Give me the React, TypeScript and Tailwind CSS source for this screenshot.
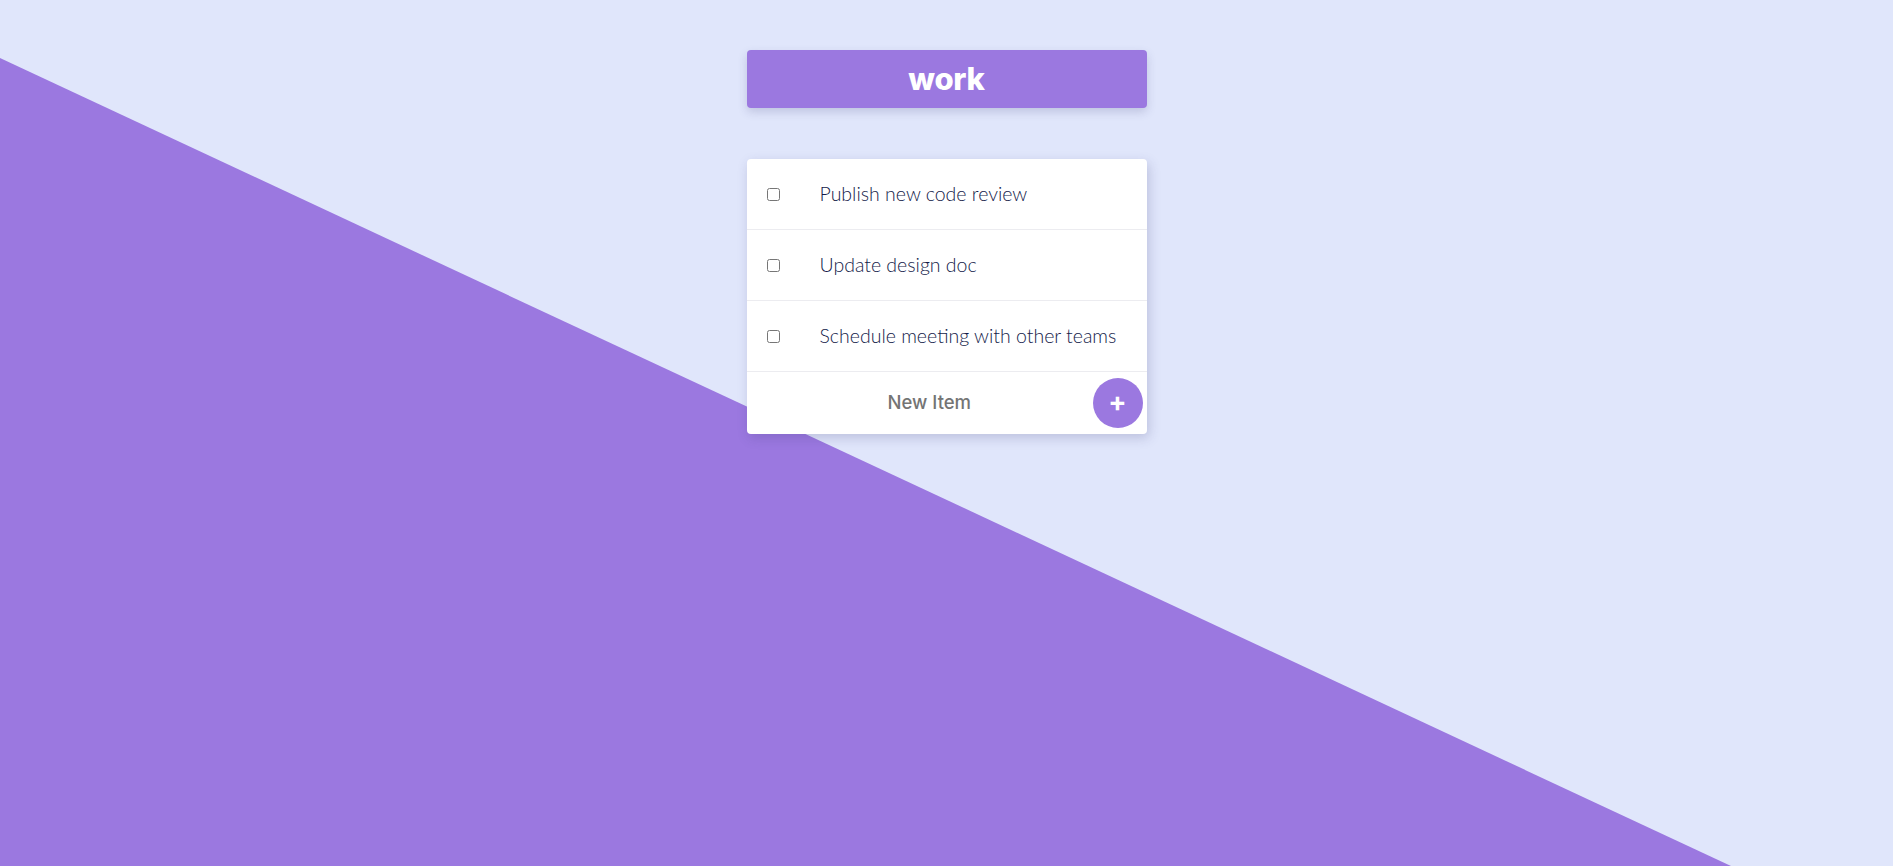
import React from "react";

const items = [
  "Publish new code review",
  "Update design doc",
  "Schedule meeting with other teams",
];

export default function App() {
  return (
    <div
      className="relative w-full h-[866px] overflow-hidden bg-[#e0e6fb]"
      style={{ fontFamily: '"Inter", "Liberation Sans", sans-serif' }}
    >
      {/* diagonal backdrop */}
      <svg
        className="absolute inset-0"
        width="1893"
        height="866"
        viewBox="0 0 1893 866"
        preserveAspectRatio="none"
      >
        <polygon points="0,58 1731,866 0,866" fill="#9b78e0" />
      </svg>

      <div className="relative flex flex-col items-center pt-[50px]">
        {/* Title */}
        <div className="w-[400px] h-[58px] rounded-[4px] bg-[#9b78e0] flex items-center justify-center shadow-[0_4px_10px_rgba(60,60,120,0.2)]">
          <h1 className="text-[31px] font-extrabold text-white leading-none pb-[2px] tracking-[-0.3px]">work</h1>
        </div>

        {/* List */}
        <div className="mt-[51px] w-[400px] bg-white rounded-[4px] shadow-[2px_4px_12px_rgba(60,60,120,0.22)]">
          {items.map((text) => (
            <div
              key={text}
              className="flex items-center h-[71px] border-b border-[#ececf0]"
            >
              <input
                type="checkbox"
                className="ml-[20px] w-[13px] h-[13px] shrink-0"
              />
              <span
                className="ml-[40px] text-[19.5px] font-light text-[#141b4a]"
                style={{ fontFamily: '"Lato", "Inter", sans-serif' }}
              >
                {text}
              </span>
            </div>
          ))}
          <div className="flex items-center h-[62px]">
            <div className="flex-1 pl-[141px] text-[18.5px] font-medium text-[#747474]">
              New Item
            </div>
            <button className="mr-[4px] w-[50px] h-[50px] rounded-full bg-[#9b78e0] text-white text-[27px] font-bold leading-none flex items-center justify-center pb-[3px]">
              +
            </button>
          </div>
        </div>
      </div>
    </div>
  );
}
